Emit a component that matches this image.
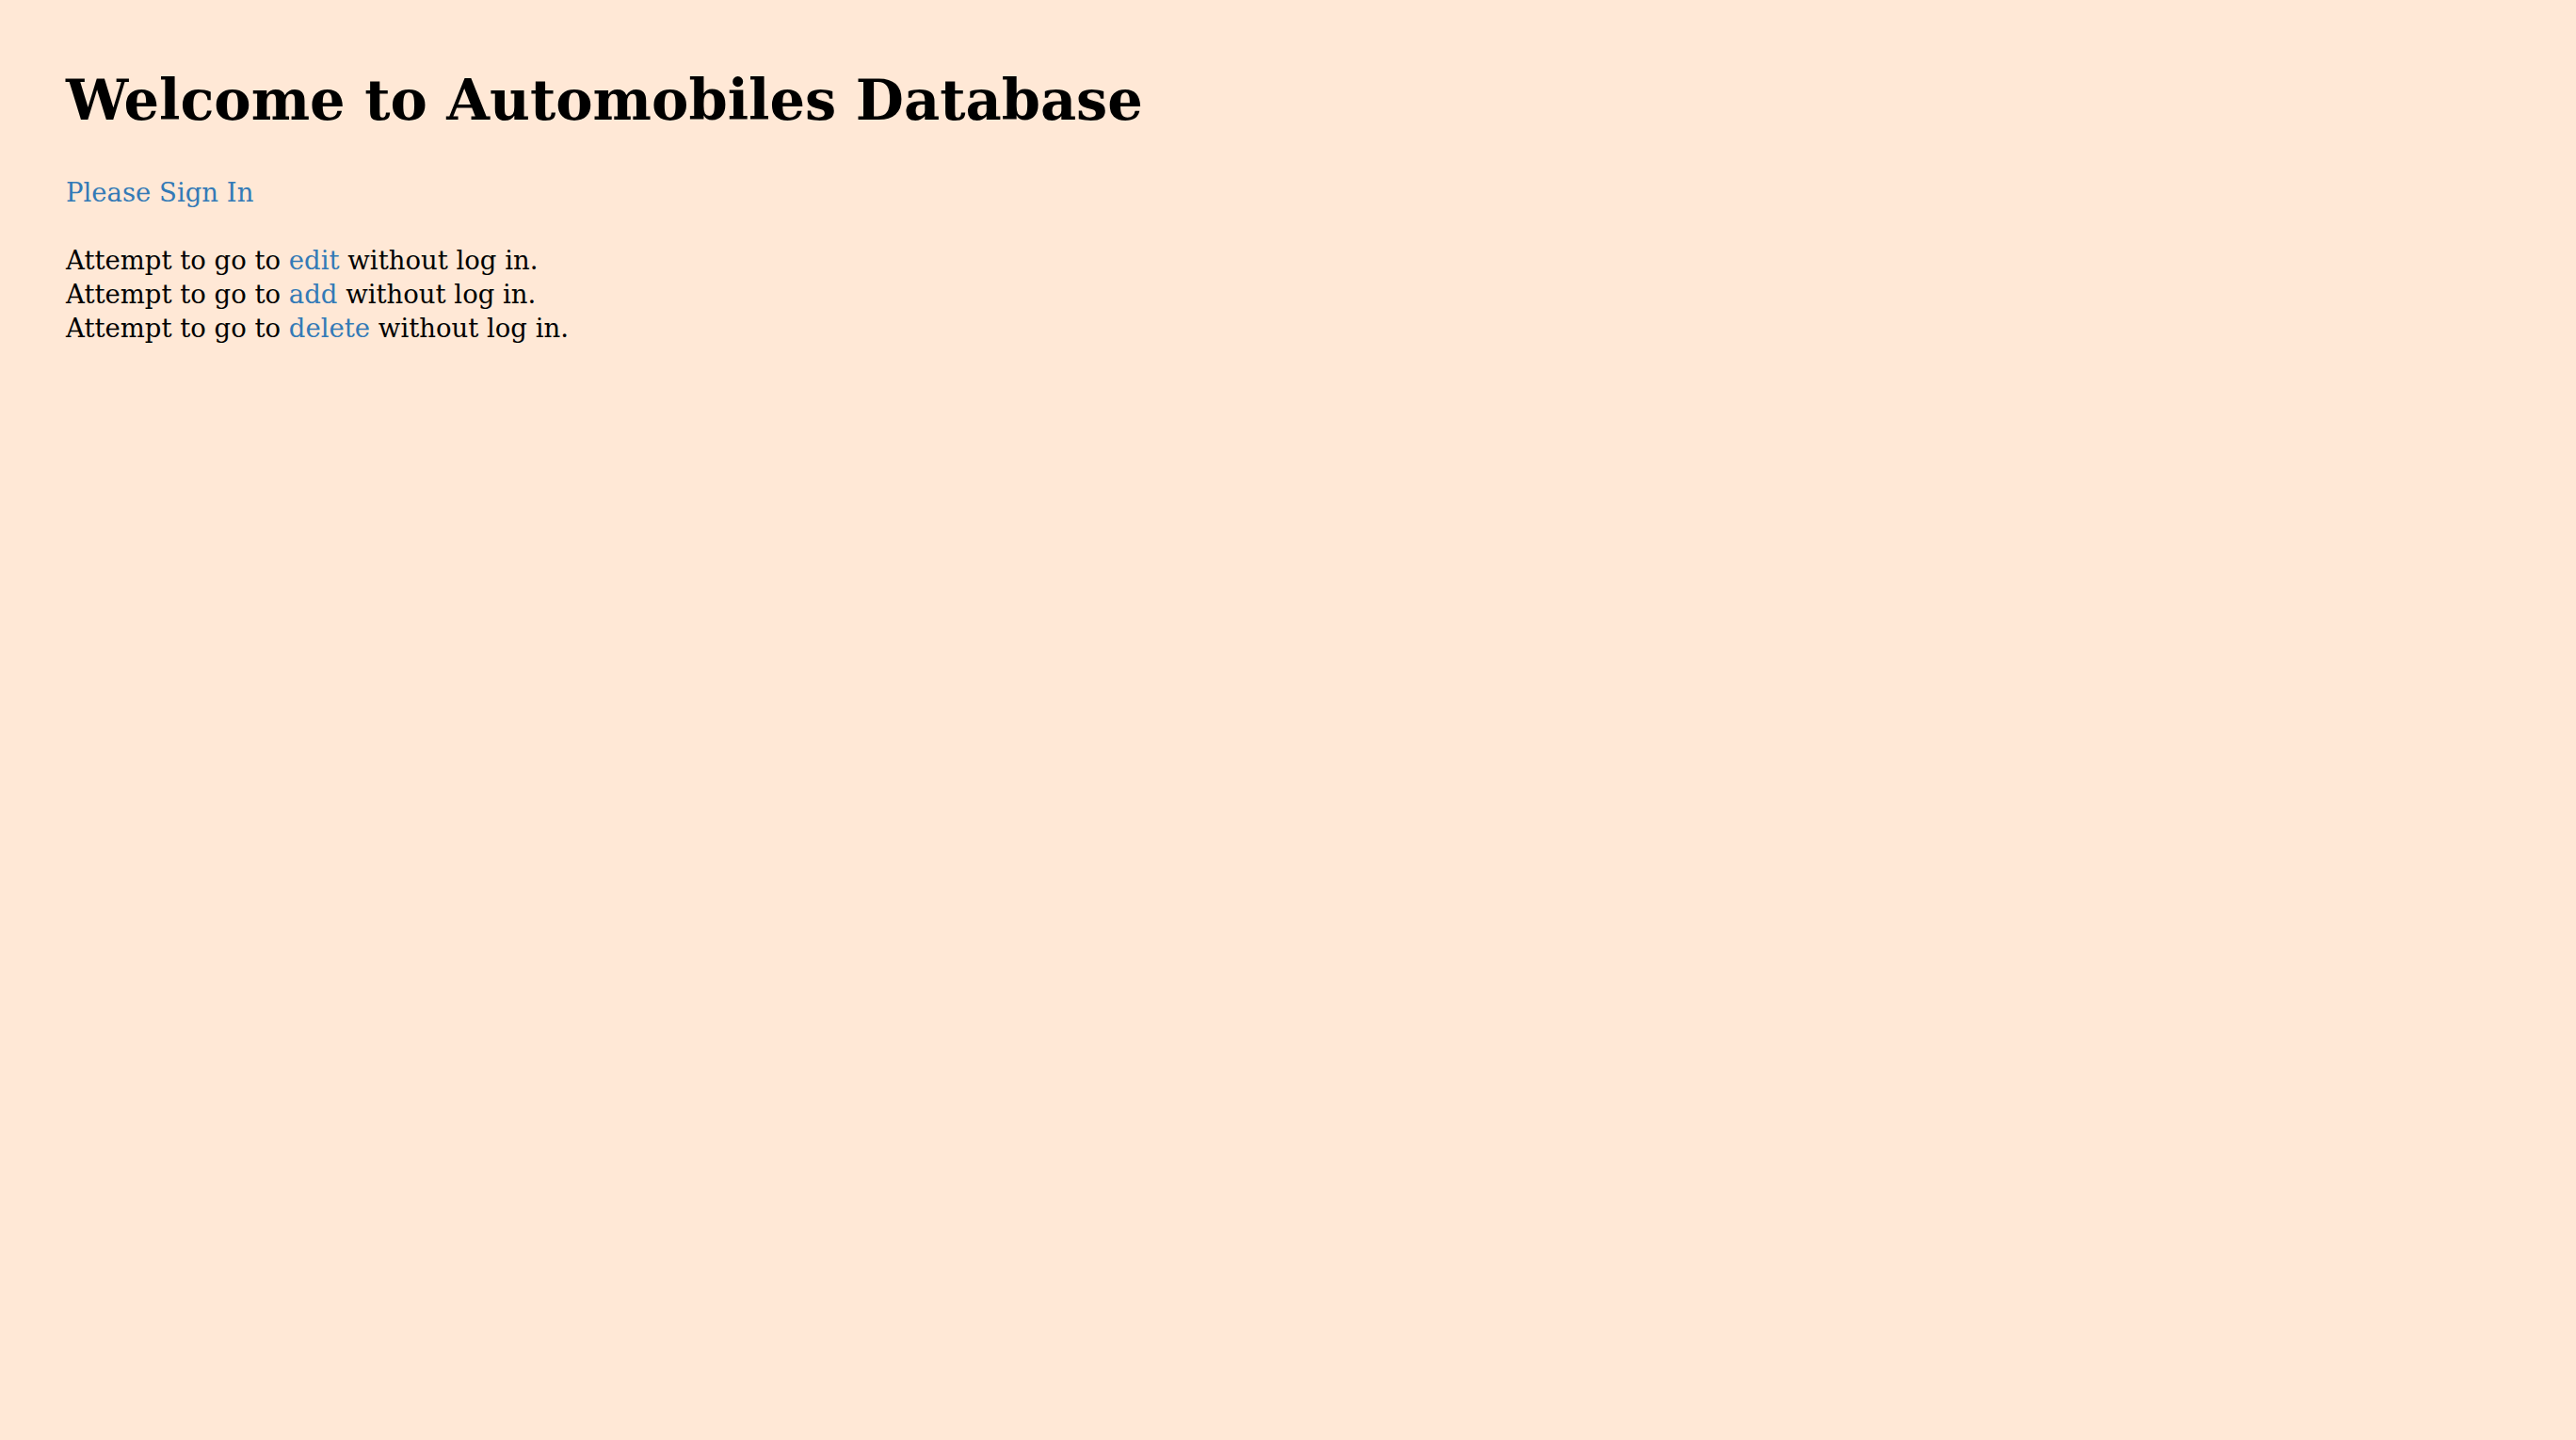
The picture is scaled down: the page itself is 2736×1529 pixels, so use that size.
export default function App() {
  return (
    <div className="min-h-screen bg-[#ffe8d6] px-[70px] pt-[67px] text-black font-['DejaVu_Serif',serif]">
      <h1 className="text-[59px] font-bold leading-[80px]">Welcome to Automobiles Database</h1>
      <a href="#" className="mt-[39px] block text-[27.5px] leading-[36px] text-[#337ab7]">
        Please Sign In
      </a>
      <div className="mt-[36px] text-[27.5px] leading-[36px]">
        <p>
          Attempt to go to <a href="#" className="text-[#337ab7]">edit</a> without log in.
        </p>
        <p>
          Attempt to go to <a href="#" className="text-[#337ab7]">add</a> without log in.
        </p>
        <p>
          Attempt to go to <a href="#" className="text-[#337ab7]">delete</a> without log in.
        </p>
      </div>
    </div>
  );
}
